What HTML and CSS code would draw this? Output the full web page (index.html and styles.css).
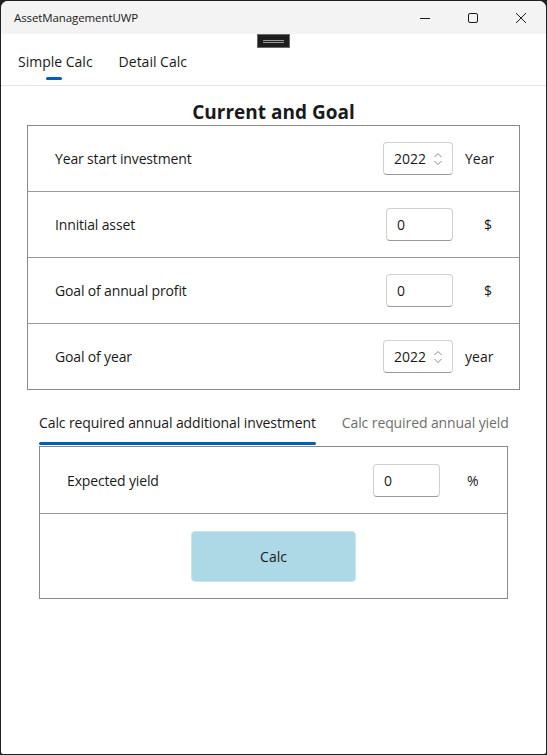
FILE: index.html
```html
<!DOCTYPE html>
<html lang="en">
<head>
<meta charset="utf-8">
<title>AssetManagementUWP</title>
<link rel="stylesheet" href="styles.css">
</head>
<body>
<div class="window">
  <header class="titlebar">
    <span class="app-title">AssetManagementUWP</span>
    <div class="caption">
      <span class="cap-btn"><svg width="12" height="12" viewBox="0 0 12 12"><path d="M1 6.5h10" stroke="#1a1a1a" stroke-width="1"/></svg></span>
      <span class="cap-btn"><svg width="12" height="12" viewBox="0 0 12 12"><rect x="1.5" y="1.5" width="9" height="9" rx="1.5" fill="none" stroke="#1a1a1a" stroke-width="1"/></svg></span>
      <span class="cap-btn"><svg width="12" height="12" viewBox="0 0 12 12"><path d="M1 1L11 11M11 1L1 11" stroke="#1a1a1a" stroke-width="1"/></svg></span>
    </div>
  </header>
  <div class="debug-bar"><span class="debug-lines"></span></div>
  <nav class="nav">
    <div class="nav-item active">Simple Calc<span class="pill"></span></div>
    <div class="nav-item">Detail Calc</div>
  </nav>
  <main class="content">
    <h1 class="heading">Current and Goal</h1>
    <section class="grid-table">
      <div class="row">
        <span class="label">Year start investment</span>
        <span class="numbox">2022<svg class="spin" width="10" height="14" viewBox="0 0 10 14"><path d="M1.5 5L5 1.5L8.5 5M1.5 9L5 12.5L8.5 9" fill="none" stroke="#8a8a8a" stroke-width="1"/></svg></span>
        <span class="unit">Year</span>
      </div>
      <div class="row">
        <span class="label">Innitial asset</span>
        <span class="textbox">0</span>
        <span class="unit dollar">$</span>
      </div>
      <div class="row">
        <span class="label">Goal of annual profit</span>
        <span class="textbox">0</span>
        <span class="unit dollar">$</span>
      </div>
      <div class="row">
        <span class="label">Goal of year</span>
        <span class="numbox">2022<svg class="spin" width="10" height="14" viewBox="0 0 10 14"><path d="M1.5 5L5 1.5L8.5 5M1.5 9L5 12.5L8.5 9" fill="none" stroke="#8a8a8a" stroke-width="1"/></svg></span>
        <span class="unit">year</span>
      </div>
    </section>

    <section class="pivot">
      <div class="pivot-headers">
        <div class="pivot-item active">Calc required annual additional investment<span class="bar"></span></div>
        <div class="pivot-item">Calc required annual yield</div>
      </div>
      <div class="grid-table inner">
        <div class="row">
          <span class="label">Expected yield</span>
          <span class="textbox">0</span>
          <span class="unit pct">%</span>
        </div>
        <div class="row btn-row">
          <button class="calc-btn">Calc</button>
        </div>
      </div>
    </section>
  </main>
</div>
</body>
</html>
```

FILE: styles.css
```css
* { box-sizing: border-box; }
html, body { margin: 0; padding: 0; }
body {
  background: #202020;
  width: 547px;
  height: 755px;
  padding: 1px;
  font-family: "Open Sans", "Noto Sans", sans-serif;
  color: #1a1a1a;
}
.window {
  position: relative;
  height: 753px;
  background: #ffffff;
  border-radius: 7px 7px 2px 2px;
  overflow: hidden;
}
.titlebar {
  height: 33px;
  background: #f3f3f3;
  display: flex;
  align-items: center;
  justify-content: space-between;
  padding-left: 13px;
  padding-right: 1px;
}
.app-title {
  font-size: 11.5px;
  letter-spacing: -0.1px;
}
.caption { display: flex; height: 100%; }
.cap-btn {
  width: 48px;
  height: 100%;
  display: flex;
  align-items: center;
  justify-content: center;
}
.debug-bar {
  position: absolute;
  left: 256px;
  top: 33px;
  width: 33px;
  height: 14px;
  background: #1e1e1e;
  border: 1px solid #6a6a6a;
  display: flex;
  align-items: center;
  justify-content: center;
}
.debug-lines {
  width: 21px;
  height: 3px;
  border-top: 1px solid #9a9a9a;
  border-bottom: 1px solid #9a9a9a;
}
.nav {
  height: 52px;
  border-bottom: 1px solid #e5e5e5;
  display: flex;
  gap: 26px;
  padding: 17px 0 0 17px;
}
.nav-item {
  position: relative;
  font-size: 14px;
  height: 22px;
  line-height: 22px;
}
.pill {
  position: absolute;
  left: 28px;
  top: 26px;
  width: 16px;
  height: 3px;
  border-radius: 2px;
  background: #005fb8;
}
.content { padding: 0 26px; }
.heading {
  margin: 13px 0 0;
  text-align: center;
  font-size: 19px;
  font-weight: 700;
  line-height: 26px;
}
.grid-table {
  border: 1px solid #8a8a8a;
}
.row {
  height: 66px;
  display: grid;
  grid-template-columns: 1fr 70px 66px;
  align-items: center;
  padding-left: 27px;
}
.row + .row {
  border-top: 1px solid #9a9a9a;
  height: 66px;
}
.grid-table > .row:first-child { height: 65px; }
.label { font-size: 14px; letter-spacing: -0.15px; }
.numbox, .textbox {
  height: 33px;
  border: 1px solid #d0d0d0;
  border-bottom-color: #9a9a9a;
  border-radius: 4px;
  font-size: 14px;
  display: flex;
  align-items: center;
}
.numbox {
  width: 70px;
  padding-left: 10px;
  gap: 7px;
}
.textbox {
  width: 67px;
  justify-self: end;
  padding-left: 10px;
}
.unit { font-size: 14px; padding-left: 12px; }
.unit.dollar { padding-left: 31px; }
.pivot {
  margin: 0 12px;
}
.pivot-headers {
  display: flex;
  gap: 26px;
  height: 56px;
  padding-top: 22px;
}
.pivot-item {
  position: relative;
  font-size: 14px;
  letter-spacing: -0.1px;
  color: #6e6e6e;
  white-space: nowrap;
  height: 22px;
  line-height: 22px;
}
.pivot-item.active { color: #1a1a1a; }
.bar {
  position: absolute;
  left: 0;
  right: 0;
  top: 30px;
  height: 3px;
  border-radius: 2px;
  background: #005fb8;
}
.grid-table.inner .row { grid-template-columns: 1fr 67px 67px; }
.grid-table.inner > .row:first-child { height: 66px; }
.unit.pct { padding-left: 27px; }
.btn-row {
  display: flex;
  justify-content: center;
  padding-left: 0;
}
.grid-table.inner .btn-row { height: 85px; }
.calc-btn {
  width: 165px;
  height: 51px;
  background: #add8e6;
  border: 1px solid #cfe3ea;
  border-radius: 4px;
  font-family: inherit;
  font-size: 14px;
  color: #1a1a1a;
}
```
